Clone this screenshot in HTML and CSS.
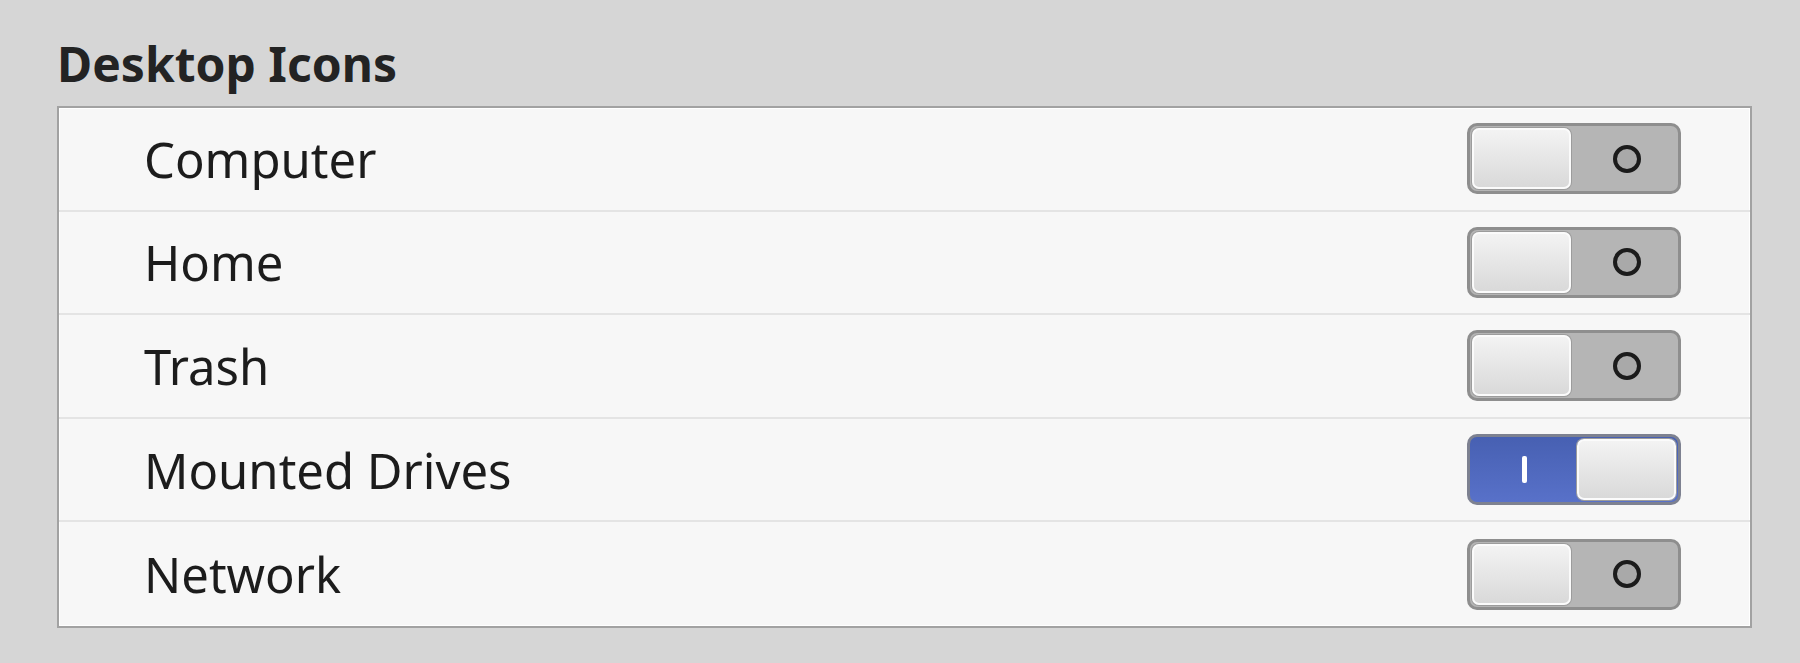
FILE: index.html
```html
<!DOCTYPE html>
<html lang="en">

<head>
    <meta charset="UTF-8">
    <meta name="viewport" content="width=device-width, initial-scale=1.0">
    <title>Desktop Icons</title>
    <link rel="stylesheet" href="styles.css">
</head>

<body>

    <div class="page">
        <h2 class="section-title">Desktop Icons</h2>

        <div class="list">
            <div class="row">
                <span class="label">Computer</span>
                <div class="switch">
                    <div class="knob"></div>
                    <div class="state"><span class="off-mark"></span></div>
                </div>
            </div>
            <div class="row">
                <span class="label">Home</span>
                <div class="switch">
                    <div class="knob"></div>
                    <div class="state"><span class="off-mark"></span></div>
                </div>
            </div>
            <div class="row">
                <span class="label">Trash</span>
                <div class="switch">
                    <div class="knob"></div>
                    <div class="state"><span class="off-mark"></span></div>
                </div>
            </div>
            <div class="row">
                <span class="label">Mounted Drives</span>
                <div class="switch on">
                    <div class="state"><span class="on-mark"></span></div>
                    <div class="knob"></div>
                </div>
            </div>
            <div class="row">
                <span class="label">Network</span>
                <div class="switch">
                    <div class="knob"></div>
                    <div class="state"><span class="off-mark"></span></div>
                </div>
            </div>
        </div>
    </div>

</body>
</html>
```

FILE: styles.css
```css
body {
    margin: 0;
    background-color: #d6d6d6;
    font-family: "Noto Sans", "Open Sans", sans-serif;
    color: #1c1c1c;
}

.page {
    padding: 31px 48px 0 57px;
}

.section-title {
    margin: 0 0 10px 0;
    font-size: 48px;
    font-weight: 700;
    line-height: normal;
    color: #232323;
}

.list {
    background-color: #f7f7f7;
    border: 2px solid #a2a2a2;
    box-shadow: inset 0 0 0 1px #ffffff;
}

.row {
    display: flex;
    align-items: center;
    justify-content: space-between;
    box-sizing: border-box;
    height: 103.6px;
    padding: 0 69px 0 85px;
    border-bottom: 2px solid #e4e4e4;
}

.row:last-child {
    border-bottom: none;
}

.label {
    font-size: 49px;
    line-height: normal;
}

/* toggle switch */
.switch {
    display: flex;
    box-sizing: border-box;
    width: 214px;
    height: 71px;
    padding: 2px;
    border: 3px solid #8e8e8e;
    border-radius: 10px;
    background-color: #b5b5b5;
}

.switch.on {
    border-color: #7d8190;
    background: linear-gradient(#4760b2, #5871c9);
}

.knob {
    box-sizing: border-box;
    width: 99px;
    height: 100%;
    border: 2px solid #fbfbfb;
    border-radius: 7px;
    background: linear-gradient(#f3f3f3, #d9d9d9);
    box-shadow: 0 0 0 1px #9c9c9c;
}

.state {
    flex: 1;
    display: flex;
    align-items: center;
    justify-content: center;
}

.off-mark {
    box-sizing: border-box;
    width: 28px;
    height: 28px;
    margin-left: 6px;
    border: 4.5px solid #1b1b1b;
    border-radius: 50%;
    background-color: #a9a9a9;
}

.on-mark {
    width: 5px;
    height: 27px;
    border-radius: 2px;
    background-color: #ffffff;
}
```
